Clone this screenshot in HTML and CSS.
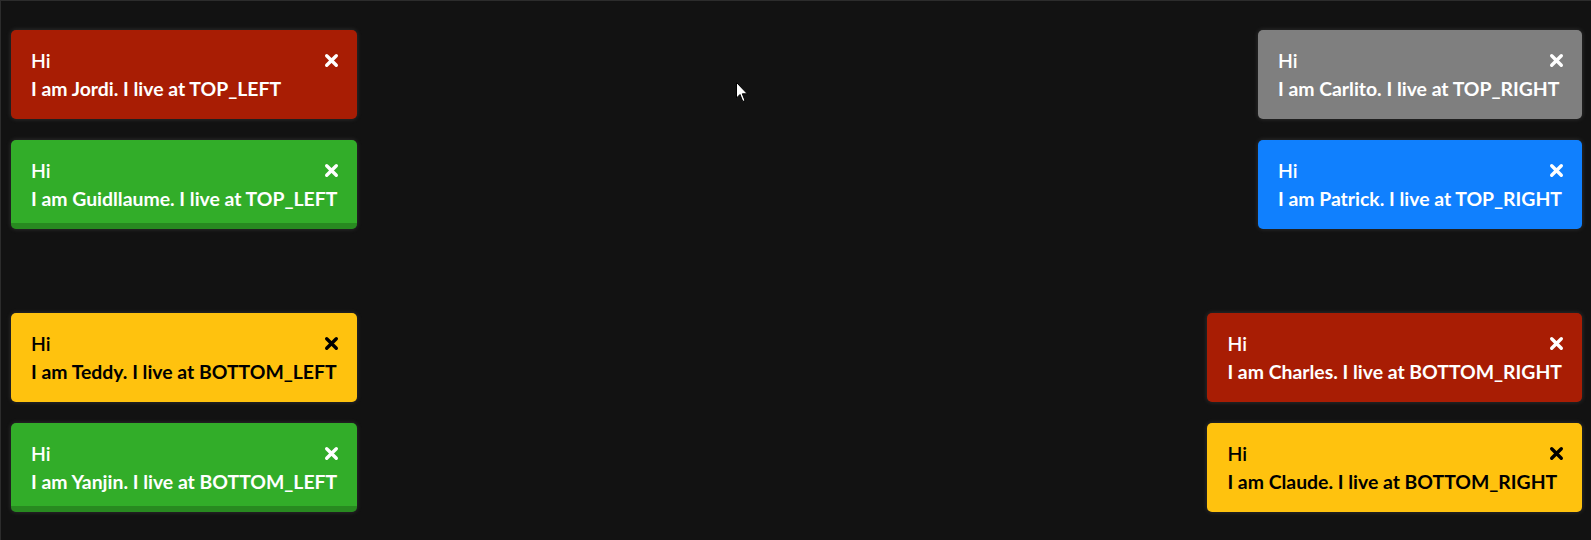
FILE: index.html
```html
<!DOCTYPE html>
<html lang="en">
<head>
<meta charset="utf-8">
<title>Toasts</title>
<link rel="stylesheet" href="styles.css">
</head>
<body>
<div class="screen">
  <div class="row">
    <div class="stack">
      <div class="toast red">
        <div class="title">Hi</div>
        <div class="msg">I am Jordi. I live at TOP_LEFT</div>
        <span class="close"><svg viewBox="0 0 13 13" width="13" height="13"><path d="M1.7 1.7 L11.3 11.3 M11.3 1.7 L1.7 11.3"/></svg></span>
      </div>
      <div class="toast green">
        <div class="title">Hi</div>
        <div class="msg">I am Guidllaume. I live at TOP_LEFT</div>
        <span class="close"><svg viewBox="0 0 13 13" width="13" height="13"><path d="M1.7 1.7 L11.3 11.3 M11.3 1.7 L1.7 11.3"/></svg></span>
        <span class="bar"></span>
      </div>
    </div>
    <div class="stack">
      <div class="toast gray">
        <div class="title">Hi</div>
        <div class="msg">I am Carlito. I live at TOP_RIGHT</div>
        <span class="close"><svg viewBox="0 0 13 13" width="13" height="13"><path d="M1.7 1.7 L11.3 11.3 M11.3 1.7 L1.7 11.3"/></svg></span>
      </div>
      <div class="toast blue">
        <div class="title">Hi</div>
        <div class="msg">I am Patrick. I live at TOP_RIGHT</div>
        <span class="close"><svg viewBox="0 0 13 13" width="13" height="13"><path d="M1.7 1.7 L11.3 11.3 M11.3 1.7 L1.7 11.3"/></svg></span>
      </div>
    </div>
  </div>
  <div class="row">
    <div class="stack">
      <div class="toast yellow">
        <div class="title">Hi</div>
        <div class="msg">I am Teddy. I live at BOTTOM_LEFT</div>
        <span class="close"><svg viewBox="0 0 13 13" width="13" height="13"><path d="M1.7 1.7 L11.3 11.3 M11.3 1.7 L1.7 11.3"/></svg></span>
      </div>
      <div class="toast green">
        <div class="title">Hi</div>
        <div class="msg">I am Yanjin. I live at BOTTOM_LEFT</div>
        <span class="close"><svg viewBox="0 0 13 13" width="13" height="13"><path d="M1.7 1.7 L11.3 11.3 M11.3 1.7 L1.7 11.3"/></svg></span>
        <span class="bar"></span>
      </div>
    </div>
    <div class="stack">
      <div class="toast red">
        <div class="title">Hi</div>
        <div class="msg">I am Charles. I live at BOTTOM_RIGHT</div>
        <span class="close"><svg viewBox="0 0 13 13" width="13" height="13"><path d="M1.7 1.7 L11.3 11.3 M11.3 1.7 L1.7 11.3"/></svg></span>
      </div>
      <div class="toast yellow">
        <div class="title">Hi</div>
        <div class="msg">I am Claude. I live at BOTTOM_RIGHT</div>
        <span class="close"><svg viewBox="0 0 13 13" width="13" height="13"><path d="M1.7 1.7 L11.3 11.3 M11.3 1.7 L1.7 11.3"/></svg></span>
      </div>
    </div>
  </div>
  <svg class="cursor" viewBox="0 0 13 21" width="13" height="21"><path d="M0.5 0.5 L0.5 16 L4 12.5 L6.8 19.5 L9 18.6 L6.3 11.8 L11.3 11.8 Z"/></svg>
</div>
</body>
</html>
```
FILE: styles.css
```css
* { box-sizing: border-box; }
html, body { margin: 0; padding: 0; background: #121212; }
body { font-family: Lato, "Noto Sans", sans-serif; }

.screen {
  position: relative;
  height: 540px;
  border-top: 1px solid #2c2c2c;
  border-left: 1px solid #2c2c2c;
  padding: 29px 9px 28px 10px;
  display: flex;
  flex-direction: column;
  justify-content: space-between;
}

.row {
  display: flex;
  justify-content: space-between;
  align-items: flex-start;
}

.stack {
  display: flex;
  flex-direction: column;
  gap: 21px;
}

.toast {
  position: relative;
  padding: 17px 20px 16px 20px;
  border-radius: 5px;
  color: #fff;
  font-size: 19.4px;
  line-height: 28px;
  box-shadow: 0 0 5px rgba(200, 200, 200, 0.18);
  overflow: hidden;
}

.title { font-weight: 600; }
.msg { font-weight: 700; white-space: nowrap; }

.red { background: #a81d04; }
.green { background: #32ad29; }
.gray { background: #7f7f7f; }
.blue { background: #1080fe; }
.yellow { background: #ffc20e; color: #000; }

.close {
  position: absolute;
  top: 24px;
  right: 19px;
  width: 13px;
  height: 13px;
  display: block;
}
.close svg { display: block; overflow: visible; }
.close path {
  stroke: #fff;
  stroke-width: 3.4;
  stroke-linecap: round;
  fill: none;
}
.yellow .close path { stroke: #000; }

.bar {
  position: absolute;
  left: 0;
  right: 0;
  bottom: 0;
  height: 6px;
  background: rgba(0, 0, 0, 0.2);
}

.cursor {
  position: absolute;
  left: 735px;
  top: 81px;
}
.cursor path {
  fill: #fff;
  stroke: #000;
  stroke-width: 1;
  stroke-linejoin: miter;
}
```
